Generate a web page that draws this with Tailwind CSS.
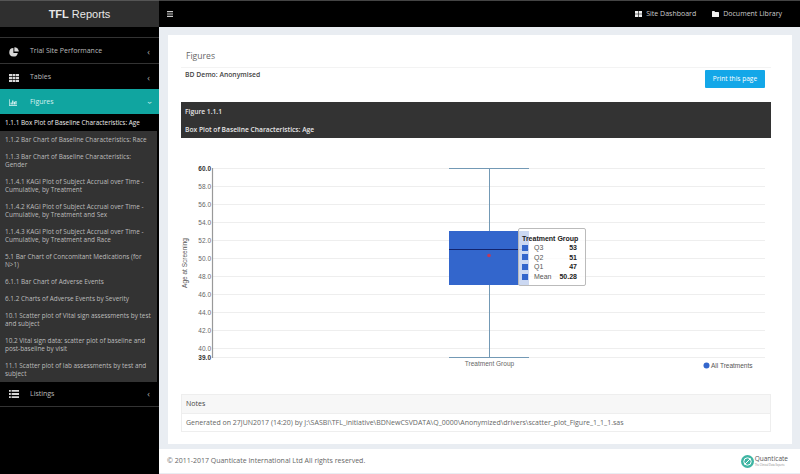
<!DOCTYPE html>
<html lang="en">
<head>
  <meta charset="UTF-8" />
  <title>TFL Reports</title>
  <script src="https://cdn.jsdelivr.net/npm/@tailwindcss/browser@4"></script>
</head>
<body class="bg-[#e9edf2] font-['Open_Sans',sans-serif] overflow-hidden">
  <div class="flex w-[800px] h-[474px] overflow-hidden">

    <!-- Sidebar -->
    <aside class="w-[159px] h-full shrink-0 bg-black flex flex-col">
      <div class="h-[27px] bg-[#2f2f2f] border-t border-[#555] flex items-center justify-center font-['Liberation_Sans',sans-serif] text-[11px] text-[#e8e8e8]"><span><b>TFL</b> Reports</span></div>
      <div class="h-[10px]"></div>
      <a class="h-[26px] border-t border-[#333] flex items-center pt-[2px] pl-[9px] pr-[9px] text-[7px] text-[#bbb]">
        <svg class="w-[10px] h-[10px]" viewBox="0 0 10 10" fill="#d8d8d8"><path d="M4.4 1a4.3 4.3 0 1 0 4.4 5H4.4z"/><path d="M5.4 0.2a4.4 4.4 0 0 1 4.4 4.4H5.4z"/></svg>
        <span class="ml-[11px] flex-1">Trial Site Performance</span>
        <span class="text-[9px] text-[#aaa]">‹</span>
      </a>
      <a class="h-[26px] border-t border-[#333] flex items-center pt-[2px] pl-[9px] pr-[9px] text-[7px] text-[#bbb]">
        <svg class="w-[10px] h-[8px]" viewBox="0 0 10 8" fill="#d8d8d8"><path d="M0 0h3v2.2H0zM3.500 0h3v2.2h-3zM7 0h3v2.2H7zM0 2.900h3v2.2H0zM3.500 2.900h3v2.2h-3zM7 2.900h3v2.2H7zM0 5.800h3V8H0zM3.500 5.800h3V8h-3zM7 5.800h3V8H7z"/></svg>
        <span class="ml-[11px] flex-1">Tables</span>
        <span class="text-[9px] text-[#aaa]">‹</span>
      </a>
      <a class="h-[25px] bg-[#10a5a0] flex items-center pt-[2px] pl-[9px] pr-[9px] text-[7px] text-[#d8f2f0]">
        <svg class="w-[8px] h-[7px] mr-[2px]" viewBox="0 0 10 8" fill="#e8f8f7"><path d="M0 0h.8v7.2H10V8H0zM2 4h1.400v2.600H2zM4 1.500h1.400v5.100H4zM6 3h1.400v3.600H6zM8 2h1.400v4.600H8z"/></svg>
        <span class="ml-[11px] flex-1">Figures</span>
        <span class="text-[9px] text-[#d8f2f0] rotate-[-90deg]">‹</span>
      </a>
      <ul class="bg-[#333] mr-[2px] text-[6.4px] leading-[8px] text-[#bdbdbd]">
        <li class="bg-black text-[#eee] px-[5px] pt-[5px] pb-[4px]">1.1.1 Box Plot of Baseline Characteristics: Age</li>
        <li class="px-[5px] pt-[5px] pb-[4px]">1.1.2 Bar Chart of Baseline Characteristics: Race</li>
        <li class="px-[5px] pt-[5px] pb-[4px]">1.1.3 Bar Chart of Baseline Characteristics: Gender</li>
        <li class="px-[5px] pt-[5px] pb-[4px]">1.1.4.1 KAGI Plot of Subject Accrual over Time - Cumulative, by Treatment</li>
        <li class="px-[5px] pt-[5px] pb-[4px]">1.1.4.2 KAGI Plot of Subject Accrual over Time - Cumulative, by Treatment and Sex</li>
        <li class="px-[5px] pt-[5px] pb-[4px]">1.1.4.3 KAGI Plot of Subject Accrual over Time - Cumulative, by Treatment and Race</li>
        <li class="px-[5px] pt-[5px] pb-[4px]">5.1 Bar Chart of Concomitant Medications (for N&gt;1)</li>
        <li class="px-[5px] pt-[5px] pb-[4px]">6.1.1 Bar Chart of Adverse Events</li>
        <li class="px-[5px] pt-[5px] pb-[4px]">6.1.2 Charts of Adverse Events by Severity</li>
        <li class="px-[5px] pt-[5px] pb-[4px]">10.1 Scatter plot of Vital sign assessments by test and subject</li>
        <li class="px-[5px] pt-[5px] pb-[4px]">10.2 Vital sign data: scatter plot of baseline and post-baseline by visit</li>
        <li class="px-[5px] pt-[5px] pb-[4px]">11.1 Scatter plot of lab assessments by test and subject</li>
      </ul>
      <a class="h-[25px] border-b border-[#333] flex items-center pl-[9px] pr-[9px] text-[7px] text-[#bbb]">
        <svg class="w-[10px] h-[8px]" viewBox="0 0 10 8" fill="#d8d8d8"><path d="M0 0h1.800v1.800H0zM2.600 0H10v1.800H2.600zM0 3.100h1.800v1.800H0zM2.600 3.100H10v1.800H2.600zM0 6.200h1.800V8H0zM2.600 6.200H10V8H2.600z"/></svg>
        <span class="ml-[11px] flex-1">Listings</span>
        <span class="text-[9px] text-[#aaa]">‹</span>
      </a>
    </aside>

    <!-- Main -->
    <div class="flex-1 flex flex-col min-w-0">
      <header class="h-[27px] bg-black border-t border-[#444] flex items-center pl-[8px] pr-[18px] text-[7px] text-[#ccc]">
        <svg class="w-[6px] h-[6px]" viewBox="0 0 6 6" fill="#ccc"><path d="M0 0h6v1.200H0zM0 2.400h6v1.200H0zM0 4.800h6V6H0z"/></svg>
        <span class="flex-1"></span>
        <svg class="w-[7px] h-[6px] mr-[4px]" viewBox="0 0 7 6" fill="#eee"><path d="M0 0h3.200v2.700H0zM3.800 0H7v2.700H3.800zM0 3.300h3.200V6H0zM3.800 3.300H7V6H3.800z"/></svg>
        <span>Site Dashboard</span>
        <svg class="w-[7px] h-[6px] ml-[16px] mr-[4px]" viewBox="0 0 7 6" fill="#eee"><path d="M0 .6C0 .2.2 0 .6 0h1.800l.7.9h3.300c.4 0 .6.2.6.6v3.900c0 .4-.2.6-.6.6H.6C.2 6 0 5.800 0 5.400z"/></svg>
        <span>Document Library</span>
      </header>

      <main class="ml-[9px] mr-[8px] mt-[8px] bg-white h-[409px] pl-[13px] pr-[21px] flex flex-col">
        <div class="pt-[15px] pl-[5px] text-[8.600px] leading-[13px] text-[#666] h-[33px] border-b border-[#f3f3f3]">Figures</div>
        <div class="flex justify-between pl-[4px] pr-[6px] h-[34px]">
          <p class="text-[6.800px] leading-[10px] pt-[2px] font-semibold text-[#444]">BD Demo: Anonymised</p>
          <button class="w-[60px] h-[18px] bg-[#13a7e8] text-white text-[6.600px] mt-[2px] rounded-[1px]">Print this page</button>
        </div>
        <div class="bg-[#333] h-[36px] pl-[4px] pt-[5px] text-[6.700px] font-semibold text-[#e6e6e6] leading-[10px]">
          <p>Figure 1.1.1</p>
          <p class="mt-[8px]">Box Plot of Baseline Characteristics: Age</p>
        </div>

        <!-- Chart -->
        <div class="relative h-[256px]">
          <svg class="absolute left-0 top-0" width="589" height="256" viewBox="181 138 589 256" font-family="Liberation Sans, sans-serif" font-size="6.500" fill="#666">
            <g stroke="#eeeeee" stroke-width="1">
              <path d="M213 168.500H765M213 186.500H765M213 204.500H765M213 222.500H765M213 240.500H765M213 258.500H765M213 276.500H765M213 294.500H765M213 312.500H765M213 330.500H765M213 348.500H765M213 357.500H765"/>
            </g>
            <path d="M212.500 168V358" stroke="#999" stroke-width="1.200"/>
            <g text-anchor="end">
              <text x="211" y="171" font-weight="bold" fill="#333">60.0</text>
              <text x="211" y="189">58.0</text>
              <text x="211" y="207">56.0</text>
              <text x="211" y="225">54.0</text>
              <text x="211" y="243">52.0</text>
              <text x="211" y="261">50.0</text>
              <text x="211" y="279">48.0</text>
              <text x="211" y="297">46.0</text>
              <text x="211" y="315">44.0</text>
              <text x="211" y="333">42.0</text>
              <text x="211" y="351">40.0</text>
              <text x="211" y="360" font-weight="bold" fill="#333">39.0</text>
            </g>
            <text transform="translate(186.500 263) rotate(-90)" text-anchor="middle" fill="#555">Age at Screening</text>
            <path d="M489.500 168V357.500M449 168.500H529M449 357.500H529" stroke="#7399b5" stroke-width="1" fill="none"/>
            <rect x="449" y="231" width="80" height="54" fill="#3366cc"/>
            <path d="M449 249.500H529" stroke="#12246e" stroke-width="1"/>
            <circle cx="489" cy="255.500" r="1.800" fill="#c0395a"/>
            <text x="489.500" y="366" text-anchor="middle">Treatment Group</text>
            <circle cx="706.500" cy="365.500" r="3" fill="#3366cc"/>
            <text x="711" y="368" fill="#555">All Treatments</text>
          </svg>

          <!-- Tooltip -->
          <div class="absolute left-[337px] top-[90px] w-[68px] h-[58px] bg-white/[0.75] border border-[#bbb] rounded-[2px] font-['Liberation_Sans',sans-serif] text-[7px] leading-[9.600px] pt-[4.500px] pl-[3px] pr-[8px] text-[#555] whitespace-nowrap">
            <p class="font-bold text-[#222]">Treatment Group</p>
            <div class="flex items-center"><span class="w-[6px] h-[6px] bg-[#3366cc] mr-[6px]"></span><span class="flex-1">Q3</span><b class="text-[#222]">53</b></div>
            <div class="flex items-center"><span class="w-[6px] h-[6px] bg-[#3366cc] mr-[6px]"></span><span class="flex-1">Q2</span><b class="text-[#222]">51</b></div>
            <div class="flex items-center"><span class="w-[6px] h-[6px] bg-[#3366cc] mr-[6px]"></span><span class="flex-1">Q1</span><b class="text-[#222]">47</b></div>
            <div class="flex items-center"><span class="w-[6px] h-[6px] bg-[#3366cc] mr-[6px]"></span><span class="flex-1">Mean</span><b class="text-[#222]">50.28</b></div>
          </div>
        </div>

        <!-- Notes -->
        <div class="border border-[#eee] h-[38px] text-[7px]">
          <div class="bg-[#f7f7f7] h-[19px] border-b border-[#eee] pl-[4px] leading-[18px] text-[#444]">Notes</div>
          <div class="pl-[4px] leading-[18px] text-[#666]">Generated on 27JUN2017 (14:20) by J:\SASBI\TFL_initiative\BDNewCSVDATA\Q_0000\Anonymized\drivers\scatter_plot_Figure_1_1_1.sas</div>
        </div>
      </main>

      <footer class="mt-[5px] flex-1 bg-white border-b border-[#e9edf2] flex items-center justify-between pl-[8px] pr-[12px] text-[7px] text-[#666]">
        <span>© 2011-2017 Quanticate International Ltd All rights reserved.</span>
        <div class="flex items-center">
          <svg class="w-[13px] h-[13px] mr-[1px]" viewBox="0 0 13 13"><circle cx="6.500" cy="6.500" r="6.500" fill="#3fb5a3"/><circle cx="6.500" cy="6.500" r="3.700" fill="none" stroke="#fff" stroke-width="1"/><path d="M3.500 9.500l6-6" stroke="#fff" stroke-width="1"/></svg>
          <div class="flex flex-col">
            <span class="text-[6.500px] leading-[8px] text-[#555]">Quanticate</span>
            <span class="text-[2.600px] leading-[4px] text-[#888]">The Clinical Data Experts</span>
          </div>
        </div>
      </footer>
    </div>
  </div>
</body>
</html>
